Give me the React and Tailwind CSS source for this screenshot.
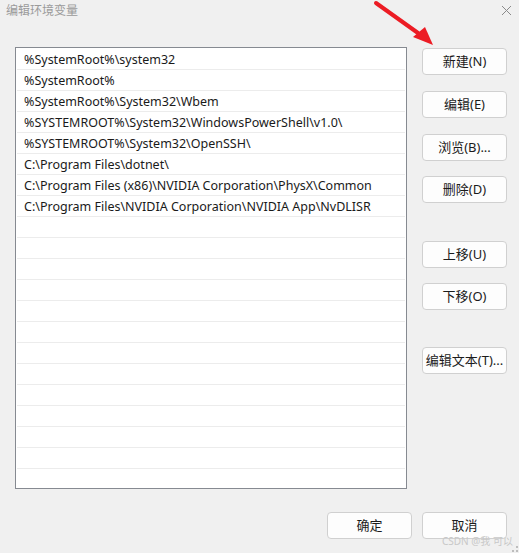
import React from "react";

const paths = [
  "%SystemRoot%\\system32",
  "%SystemRoot%",
  "%SystemRoot%\\System32\\Wbem",
  "%SYSTEMROOT%\\System32\\WindowsPowerShell\\v1.0\\",
  "%SYSTEMROOT%\\System32\\OpenSSH\\",
  "C:\\Program Files\\dotnet\\",
  "C:\\Program Files (x86)\\NVIDIA Corporation\\PhysX\\Common",
  "C:\\Program Files\\NVIDIA Corporation\\NVIDIA App\\NvDLISR",
];

const ROWS = 21;

const Btn = ({ children, className = "" }) => (
  <button
    className={`w-[85px] h-[27px] shrink-0 rounded-[4px] border border-[#d0d0d0] bg-[#fdfdfd] text-[13px] text-[#1b1b1b] flex items-center justify-center ${className}`}
  >
    {children}
  </button>
);

export default function App() {
  const rows = Array.from({ length: ROWS }, (_, i) => paths[i] ?? "");

  return (
    <div
      className="relative w-[519px] h-[553px] overflow-hidden bg-[#f0f0f0] flex flex-col"
      style={{ fontFamily: '"Noto Sans", "Noto Sans CJK SC", sans-serif' }}
    >
      {/* title bar */}
      <div className="h-[21px] px-[6px] flex items-center justify-between shrink-0">
        <span className="text-[12px] text-[#9a9a9a]">编辑环境变量</span>
        <svg width="11" height="11" viewBox="0 0 11 11" className="mr-[1px]">
          <path d="M1 1L10 10M10 1L1 10" stroke="#8a8a8a" strokeWidth="1" />
        </svg>
      </div>

      <div className="flex mt-[26px] pl-[15px] gap-[15px]">
        {/* path list */}
        <div className="w-[392px] h-[442px] shrink-0 border border-[#868a91] bg-white px-[1px] pt-[1px] overflow-hidden">
          {rows.map((p, i) => (
            <div
              key={i}
              className="h-[21px] border-b border-[#ececec] pl-[7px] pt-[2px] flex items-center text-[12.5px] text-[#1a1a1a] whitespace-nowrap"
            >
              {p}
            </div>
          ))}
        </div>

        {/* side buttons */}
        <div className="flex flex-col pt-[1px]">
          <Btn>新建(N)</Btn>
          <Btn className="mt-[16px]">编辑(E)</Btn>
          <Btn className="mt-[16px]">浏览(B)...</Btn>
          <Btn className="mt-[15px]">删除(D)</Btn>
          <Btn className="mt-[38px]">上移(U)</Btn>
          <Btn className="mt-[15px]">下移(O)</Btn>
          <Btn className="mt-[37px]">编辑文本(T)...</Btn>
        </div>
      </div>

      <div className="flex justify-end gap-[10px] pr-[12px] mt-[23px]">
        <Btn>确定</Btn>
        <Btn>取消</Btn>
      </div>

      {/* red arrow pointing at the 新建 button */}
      <svg
        width="70"
        height="52"
        viewBox="0 0 70 52"
        className="absolute left-[370px] top-0 pointer-events-none"
      >
        <path d="M6 3L48 33" stroke="#ec1c24" strokeWidth="4" strokeLinecap="round" />
        <path d="M63 45L43 37L55 27Z" fill="#ec1c24" />
      </svg>

      {/* watermark */}
      <span className="absolute left-[442px] top-[535px] text-[10px] leading-[12px] text-[#c8c8c8] whitespace-nowrap">
        CSDN @我 可以
      </span>

      {/* resize grip */}
      <svg width="6" height="6" viewBox="0 0 6 6" className="absolute right-[1px] bottom-[1px]">
        <rect x="4" y="0" width="2" height="2" fill="#bdbdbd" />
        <rect x="0" y="4" width="2" height="2" fill="#bdbdbd" />
        <rect x="4" y="4" width="2" height="2" fill="#bdbdbd" />
      </svg>
    </div>
  );
}
